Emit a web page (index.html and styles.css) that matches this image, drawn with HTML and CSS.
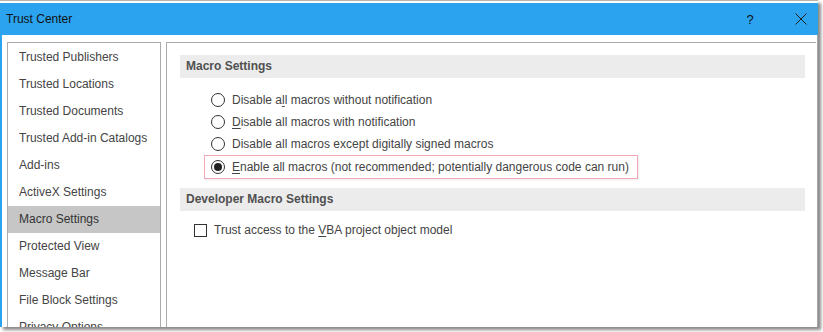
FILE: index.html
```html
<!DOCTYPE html>
<html lang="en">
<head>
    <meta charset="UTF-8">
    <title>Trust Center</title>
    <link rel="stylesheet" href="styles.css">
</head>
<body>

    <div class="window">
        <div class="title-bar">
            <span class="title">Trust Center</span>
            <span class="title-btn help">?</span>
            <span class="title-btn close">
                <svg width="12" height="12" viewBox="0 0 12 12"><path d="M0.5 0.5 L11.5 11.5 M11.5 0.5 L0.5 11.5" stroke="#222" stroke-width="1" fill="none"/></svg>
            </span>
        </div>

        <div class="dialog-body">
            <ul class="nav">
                <li>Trusted Publishers</li>
                <li>Trusted Locations</li>
                <li>Trusted Documents</li>
                <li>Trusted Add-in Catalogs</li>
                <li>Add-ins</li>
                <li>ActiveX Settings</li>
                <li class="active">Macro Settings</li>
                <li>Protected View</li>
                <li>Message Bar</li>
                <li>File Block Settings</li>
                <li>Privacy Options</li>
            </ul>

            <div class="panel">
                <h2 class="section-head">Macro Settings</h2>
                <div class="options">
                    <label class="option"><span class="radio"></span><span>Disable a<u>l</u>l macros without notification</span></label>
                    <label class="option"><span class="radio"></span><span><u>D</u>isable all macros with notification</span></label>
                    <label class="option"><span class="radio"></span><span>Disable all macros except digitally signed macros</span></label>
                    <label class="option highlight"><span class="radio checked"></span><span><u>E</u>nable all macros (not recommended; potentially dangerous code can run)</span></label>
                </div>

                <h2 class="section-head dev">Developer Macro Settings</h2>
                <label class="check-row"><span class="checkbox"></span><span>Trust access to the <u>V</u>BA project object model</span></label>
            </div>
        </div>
    </div>

</body>
</html>
```

FILE: styles.css
```css
* {
    margin: 0;
    padding: 0;
    box-sizing: border-box;
}

body {
    background-color: #fff;
    font-family: 'Liberation Sans', Arial, sans-serif;
    font-size: 12px;
    color: #444;
    height: 332px;
    overflow: hidden;
}

.window {
    width: 818px;
    height: 327px;
    border-top: 1px solid #b5b5b5;
    background-color: #fff;
    box-shadow: 3px 3px 3px #8a8a8a;
    display: flex;
    flex-direction: column;
    overflow: hidden;
}

.title-bar {
    margin-top: 2px;
    height: 32px;
    background-color: #2ba3ef;
    display: flex;
    align-items: center;
    padding-left: 6px;
    color: #111;
    flex-shrink: 0;
}

.title {
    flex: 1;
    font-size: 12px;
}

.title-btn {
    display: flex;
    align-items: center;
    justify-content: center;
    width: 30px;
    font-size: 13px;
}

.help {
    margin-right: 21px;
}

.close {
    margin-right: 2px;
}

.dialog-body {
    flex: 1;
    display: flex;
    gap: 5px;
    padding: 7px 1px 0 5px;
    border-left: 2px solid #2ba3ef;
    border-right: 1px solid #a9a9a9;
    min-height: 0;
}

.nav {
    list-style: none;
    width: 154px;
    border: 1px solid #ababab;
    border-bottom: none;
    padding-top: 1px;
    overflow: hidden;
}

.nav li {
    height: 27px;
    line-height: 27px;
    padding-left: 11px;
    white-space: nowrap;
}

.nav li.active {
    background-color: #c6c6c6;
    color: #333;
}

.panel {
    flex: 1;
    border: 1px solid #ababab;
    border-bottom: none;
    border-right: none;
    padding: 12px 11px 0 13px;
}

.section-head {
    height: 23px;
    line-height: 23px;
    background-color: #ececec;
    padding-left: 6px;
    font-size: 12px;
    font-weight: bold;
    color: #505050;
}

.options {
    display: flex;
    flex-direction: column;
    margin-top: 11px;
}

.option {
    display: flex;
    align-items: center;
    height: 22px;
    padding-left: 6px;
    margin-left: 24px;
    width: fit-content;
    padding-right: 8px;
    border: 1px solid transparent;
}

.option.highlight {
    border-color: #f2a7b7;
    box-shadow: 1px 1px 2px rgba(0, 0, 0, 0.08);
    height: 24px;
}

.radio {
    width: 14px;
    height: 14px;
    border: 1px solid #333;
    border-radius: 50%;
    margin-right: 7px;
    display: flex;
    align-items: center;
    justify-content: center;
}

.radio.checked::after {
    content: "";
    width: 8px;
    height: 8px;
    border-radius: 50%;
    background-color: #222;
}

.section-head.dev {
    margin-top: 9px;
}

.check-row {
    display: flex;
    align-items: center;
    height: 22px;
    margin-top: 8px;
    margin-left: 14px;
}

.checkbox {
    width: 13px;
    height: 13px;
    border: 1px solid #333;
    margin-right: 7px;
}

u {
    text-decoration: underline;
    text-underline-offset: 2px;
}
```
